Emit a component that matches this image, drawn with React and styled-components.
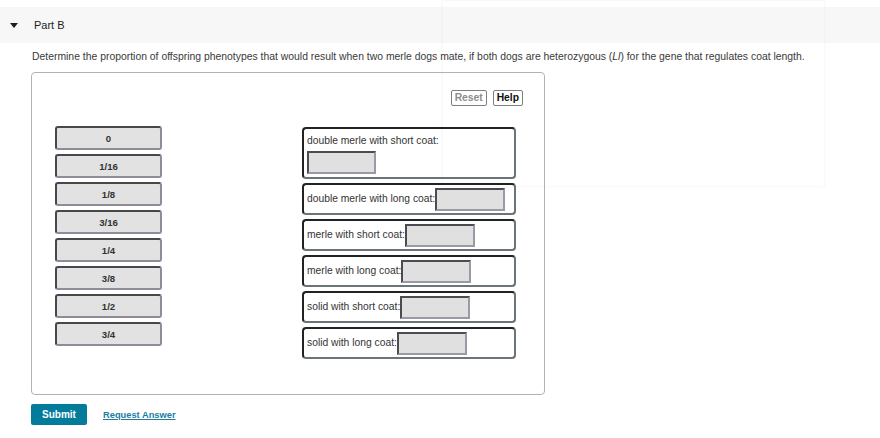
import React from 'react';
import styled, { createGlobalStyle } from 'styled-components';

const GlobalStyle = createGlobalStyle`
  body {
    margin: 0;
    background: #fff;
    font-family: "Liberation Sans", Arial, sans-serif;
    color: #333;
  }
`;

const Page = styled.div`
  position: relative;
  width: 880px;
  height: 438px;
  padding-top: 7px;
  box-sizing: border-box;
`;

const PartHeader = styled.div`
  height: 36px;
  background: #f7f7f7;
  display: flex;
  align-items: center;
  padding-left: 10px;
  gap: 16px;
  font-size: 11px;
  color: #1d1d1d;
`;

const Prompt = styled.p`
  margin: 8px 0 0 32px;
  font-size: 10.4px;
  line-height: 12px;
  color: #3a3a3a;
  white-space: nowrap;
`;

const Board = styled.div`
  margin: 9px 0 0 31px;
  width: 514px;
  height: 323px;
  box-sizing: border-box;
  border: 1px solid #b3b3b3;
  border-radius: 4px;
  padding: 17px 21px 0 23px;
`;

const Toolbar = styled.div`
  display: flex;
  justify-content: flex-end;
  gap: 6px;
`;

const ToolButton = styled.button`
  height: 16px;
  padding: 0 3px;
  border: 1px solid #7a7f82;
  border-radius: 2px;
  background: #fff;
  font-family: inherit;
  font-size: 10.3px;
  font-weight: bold;
  color: ${(p) => (p.$muted ? '#8c8c8c' : '#111')};
  line-height: 14px;
`;

const Columns = styled.div`
  display: flex;
  gap: 140px;
  margin-top: 20px;
`;

const TileList = styled.div`
  display: flex;
  flex-direction: column;
  gap: 4px;
  width: 107px;
`;

const Tile = styled.div`
  height: 24px;
  box-sizing: border-box;
  background: #e2e2e2;
  border: 2px solid #8e8b9b;
  border-top-color: #47474c;
  border-left-color: #47474c;
  border-radius: 3px;
  display: flex;
  align-items: center;
  justify-content: center;
  font-size: 9.6px;
  font-weight: bold;
  color: #333;
`;

const ZoneList = styled.div`
  display: flex;
  flex-direction: column;
  gap: 4px;
  width: 214px;
  margin-top: 1px;
`;

const Zone = styled.div`
  box-sizing: border-box;
  height: ${(p) => (p.$stacked ? '52px' : '32px')};
  border: 2px solid #6b7478;
  border-top-color: #222;
  border-left-color: #222;
  border-radius: 4px;
  padding: 2px 3px;
  display: flex;
  flex-direction: ${(p) => (p.$stacked ? 'column' : 'row')};
  align-items: ${(p) => (p.$stacked ? 'flex-start' : 'center')};
  font-size: 10.3px;
  color: #333;
`;

const ZoneLabel = styled.span`
  line-height: ${(p) => (p.$stacked ? '20px' : '12px')};
  white-space: nowrap;
`;

const Slot = styled.div`
  width: ${(p) => p.$w || 70}px;
  height: 23px;
  box-sizing: border-box;
  flex-shrink: 0;
  background: #e0e0e0;
  border: 2px solid #9b98a8;
  border-top-color: #4b4b50;
  border-left-color: #4b4b50;
`;

const Actions = styled.div`
  display: flex;
  align-items: center;
  gap: 16px;
  margin: 9px 0 0 31px;
`;

const SubmitButton = styled.button`
  width: 56px;
  height: 21px;
  border: none;
  border-radius: 2px;
  background: #037c9c;
  color: #fff;
  font-family: inherit;
  font-size: 10px;
  font-weight: bold;
`;

const AnswerLink = styled.a`
  color: #1b7ea0;
  font-size: 9.3px;
  font-weight: bold;
  text-decoration: underline;
`;

const GhostPanel = styled.div`
  position: absolute;
  left: 442px;
  top: 0;
  width: 383px;
  height: 187px;
  box-sizing: border-box;
  border: 1px solid rgba(0, 0, 0, 0.025);
  box-shadow: 0 0 5px rgba(0, 0, 0, 0.025);
  pointer-events: none;
`;

const tiles = ['0', '1/16', '1/8', '3/16', '1/4', '3/8', '1/2', '3/4'];

const zones = [
  { label: 'double merle with short coat:', stacked: true, w: 69 },
  { label: 'double merle with long coat:' },
  { label: 'merle with short coat:' },
  { label: 'merle with long coat:' },
  { label: 'solid with short coat:' },
  { label: 'solid with long coat:' },
];

function Caret() {
  return (
    <svg width="8" height="5" viewBox="0 0 8 5">
      <path d="M0 0 H8 L4 5 Z" fill="#1d1d1d" />
    </svg>
  );
}

export default function App() {
  return (
    <Page>
      <GlobalStyle />
      <PartHeader>
        <Caret />
        <span>Part B</span>
      </PartHeader>
      <Prompt>
        Determine the proportion of offspring phenotypes that would result when two merle dogs
        mate, if both dogs are heterozygous (<i>Ll</i>) for the gene that regulates coat length.
      </Prompt>
      <Board>
        <Toolbar>
          <ToolButton $muted>Reset</ToolButton>
          <ToolButton>Help</ToolButton>
        </Toolbar>
        <Columns>
          <TileList>
            {tiles.map((t) => (
              <Tile key={t}>{t}</Tile>
            ))}
          </TileList>
          <ZoneList>
            {zones.map((z) => (
              <Zone key={z.label} $stacked={z.stacked}>
                <ZoneLabel $stacked={z.stacked}>{z.label}</ZoneLabel>
                <Slot $w={z.w} />
              </Zone>
            ))}
          </ZoneList>
        </Columns>
      </Board>
      <Actions>
        <SubmitButton>Submit</SubmitButton>
        <AnswerLink href="#">Request Answer</AnswerLink>
      </Actions>
      <GhostPanel />
    </Page>
  );
}
